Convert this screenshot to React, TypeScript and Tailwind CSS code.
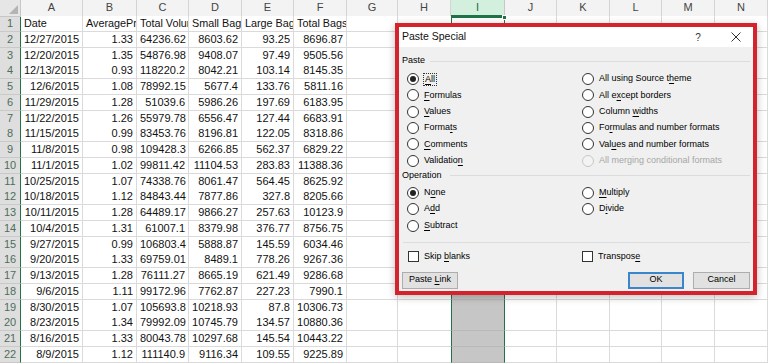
import React from "react";

const GRID =
  "grid grid-cols-[21px_62px_54px_52px_53px_52px_53px_51px_53px_54px_52px_53px_52px_53px_53px]";

const letters = ["A", "B", "C", "D", "E", "F", "G", "H", "I", "J", "K", "L", "M", "N"];

const head = ["Date", "AveragePrice", "Total Volume", "Small Bags", "Large Bags", "Total Bags"];

const data: string[][] = [
  ["12/27/2015", "1.33", "64236.62", "8603.62", "93.25", "8696.87"],
  ["12/20/2015", "1.35", "54876.98", "9408.07", "97.49", "9505.56"],
  ["12/13/2015", "0.93", "118220.2", "8042.21", "103.14", "8145.35"],
  ["12/6/2015", "1.08", "78992.15", "5677.4", "133.76", "5811.16"],
  ["11/29/2015", "1.28", "51039.6", "5986.26", "197.69", "6183.95"],
  ["11/22/2015", "1.26", "55979.78", "6556.47", "127.44", "6683.91"],
  ["11/15/2015", "0.99", "83453.76", "8196.81", "122.05", "8318.86"],
  ["11/8/2015", "0.98", "109428.3", "6266.85", "562.37", "6829.22"],
  ["11/1/2015", "1.02", "99811.42", "11104.53", "283.83", "11388.36"],
  ["10/25/2015", "1.07", "74338.76", "8061.47", "564.45", "8625.92"],
  ["10/18/2015", "1.12", "84843.44", "7877.86", "327.8", "8205.66"],
  ["10/11/2015", "1.28", "64489.17", "9866.27", "257.63", "10123.9"],
  ["10/4/2015", "1.31", "61007.1", "8379.98", "376.77", "8756.75"],
  ["9/27/2015", "0.99", "106803.4", "5888.87", "145.59", "6034.46"],
  ["9/20/2015", "1.33", "69759.01", "8489.1", "778.26", "9267.36"],
  ["9/13/2015", "1.28", "76111.27", "8665.19", "621.49", "9286.68"],
  ["9/6/2015", "1.11", "99172.96", "7762.87", "227.23", "7990.1"],
  ["8/30/2015", "1.07", "105693.8", "10218.93", "87.8", "10306.73"],
  ["8/23/2015", "1.34", "79992.09", "10745.79", "134.57", "10880.36"],
  ["8/16/2015", "1.33", "80043.78", "10297.68", "145.54", "10443.22"],
  ["8/9/2015", "1.12", "111140.9", "9116.34", "109.55", "9225.89"],
];

function cellClass(ci: number, row: number): string {
  if (ci === 9) {
    if (row === 1)
      return "h-full bg-white border-t-2 border-t-[#217346] border-x border-x-[#217346] border-b border-b-[#d4d4d4]";
    return "h-full bg-[#c6c6c6] border-x border-x-[#217346] border-b border-b-[#b9b9b9]";
  }
  if (ci === 8) return "h-full bg-white border-b border-[#dadada]";
  return "h-full bg-white border-r border-b border-[#dadada]";
}

function Row({ n, cells }: { n: number; cells: string[] }) {
  const isHead = n === 1;
  return (
    <div className={GRID + " h-[15.75px]"}>
      <div className="h-full bg-[#dedede] border-r border-r-[#217346] border-b border-b-[#c9c9c9] text-center text-[#4f6d5a] text-[11px] leading-[15px]">
        {n}
      </div>
      {letters.map((_, i) => {
        const ci = i + 1;
        const v = i < 6 ? cells[i] : "";
        return (
          <div key={ci} className={cellClass(ci, n)}>
            {v ? (
              <div
                className={
                  isHead
                    ? "px-[3px] text-left whitespace-nowrap overflow-hidden text-[10.8px] leading-[15px] text-[#111]"
                    : "px-[3px] text-right whitespace-nowrap overflow-hidden text-[11px] leading-[15px] text-[#111]"
                }
              >
                {v}
              </div>
            ) : null}
          </div>
        );
      })}
    </div>
  );
}

function Radio({ checked, disabled }: { checked?: boolean; disabled?: boolean }) {
  return (
    <span
      className={
        disabled
          ? "w-[12px] h-[12px] rounded-full border border-[#c8c8c8] bg-[#f3f3f3] flex items-center justify-center shrink-0"
          : "w-[12px] h-[12px] rounded-full border border-[#333] bg-white flex items-center justify-center shrink-0"
      }
    >
      {checked ? <span className="w-[6px] h-[6px] rounded-full bg-[#222]" /> : null}
    </span>
  );
}

function U({ children }: { children: React.ReactNode }) {
  return <span className="underline underline-offset-[1.5px] decoration-[0.8px]">{children}</span>;
}

function Opt({
  label,
  checked,
  disabled,
  focus,
}: {
  label: React.ReactNode;
  checked?: boolean;
  disabled?: boolean;
  focus?: boolean;
}) {
  return (
    <div className="h-[16.3px] flex items-center">
      <Radio checked={checked} disabled={disabled} />
      <span
        className={
          focus
            ? "ml-[4px] px-[1px] border border-dotted border-[#333] leading-[11px] text-[#000]"
            : disabled
            ? "ml-[5px] text-[#a6a6a6]"
            : "ml-[5px] text-[#000]"
        }
      >
        {label}
      </span>
    </div>
  );
}

function Check({ label }: { label: React.ReactNode }) {
  return (
    <div className="h-[14px] flex items-center">
      <span className="w-[11px] h-[11px] border border-[#333] bg-white shrink-0" />
      <span className="ml-[5px] text-[#000]">{label}</span>
    </div>
  );
}

function Dialog() {
  return (
    <div className="absolute left-[395px] top-[23px] w-[362px] h-[272px] border-4 border-[#d5232e] flex flex-col shadow-[0_2px_8px_rgba(0,0,0,0.25)] font-['Liberation_Sans',Arial,sans-serif] text-[9px]">
      <div className="h-[20px] bg-white flex items-center pl-[3px] shrink-0">
        <span className="text-[10.5px] text-[#111]">Paste Special</span>
        <div className="flex-1" />
        <span className="w-[10px] text-center text-[10px] text-[#333]">?</span>
        <span className="ml-[28px] mr-[12px] w-[10px] h-[10px] flex">
          <svg width="10" height="10" viewBox="0 0 10 10">
            <path d="M0.5 0.5 L9.5 9.5 M9.5 0.5 L0.5 9.5" stroke="#333" strokeWidth="1" fill="none" />
          </svg>
        </span>
      </div>
      <div className="flex-1 bg-[#f0f0f0] flex flex-col">
        <div className="mt-[7px] h-[14px] flex items-center pl-[3px] pr-[3px]">
          <span className="text-[#000]">Paste</span>
          <span className="ml-[5px] flex-1 h-px bg-[#dcdcdc]" />
        </div>
        <div className="mt-[3px] pl-[8px] grid grid-cols-[175px_1fr]">
          <Opt label={<><U>A</U>ll</>} checked focus />
          <Opt label={<>All using Source t<U>h</U>eme</>} />
          <Opt label={<><U>F</U>ormulas</>} />
          <Opt label={<>All e<U>x</U>cept borders</>} />
          <Opt label={<><U>V</U>alues</>} />
          <Opt label={<>Column <U>w</U>idths</>} />
          <Opt label={<>Forma<U>t</U>s</>} />
          <Opt label={<>Fo<U>r</U>mulas and number formats</>} />
          <Opt label={<><U>C</U>omments</>} />
          <Opt label={<>Val<U>u</U>es and number formats</>} />
          <Opt label={<>Validatio<U>n</U></>} />
          <Opt label={<>All merging conditional formats</>} disabled />
        </div>
        <div className="h-[14px] flex items-center pl-[3px] pr-[3px]">
          <span className="text-[#000]">Operation</span>
          <span className="ml-[8px] flex-1 h-px bg-[#dcdcdc]" />
        </div>
        <div className="mt-[2px] pl-[8px] grid grid-cols-[175px_1fr]">
          <Opt label={<>N<U>o</U>ne</>} checked />
          <Opt label={<><U>M</U>ultiply</>} />
          <Opt label={<>A<U>d</U>d</>} />
          <Opt label={<>D<U>i</U>vide</>} />
          <Opt label={<><U>S</U>ubtract</>} />
          <div />
        </div>
        <div className="mt-[8px] ml-[4px] mr-[3px] h-px bg-[#dcdcdc]" />
        <div className="mt-[7px] pl-[9px] grid grid-cols-[174px_1fr]">
          <Check label={<>Skip <U>b</U>lanks</>} />
          <Check label={<>Transpos<U>e</U></>} />
        </div>
        <div className="mt-[8px] px-[3px] flex items-center">
          <div className="w-[56px] h-[17px] bg-[#e1e1e1] border border-[#adadad] flex items-center justify-center text-[#000]">
            <span>
              Paste <U>L</U>ink
            </span>
          </div>
          <div className="flex-1" />
          <div className="w-[56px] h-[17px] bg-[#e1e1e1] border-2 border-[#3a86cc] flex items-center justify-center text-[#000]">
            <span>OK</span>
          </div>
          <div className="ml-[9px] w-[57px] h-[17px] bg-[#e1e1e1] border border-[#adadad] flex items-center justify-center text-[#000]">
            <span>Cancel</span>
          </div>
        </div>
      </div>
    </div>
  );
}

export default function App() {
  return (
    <div className="relative w-[768px] h-[363px] overflow-hidden bg-white font-['Liberation_Sans',Arial,sans-serif]">
      <div className={GRID + " h-[16px]"}>
        <div className="h-full bg-[#e6e6e6] border-r border-b border-[#c6c6c6] relative">
          <svg className="absolute right-[2px] bottom-[2px]" width="9" height="9" viewBox="0 0 9 9">
            <path d="M9 0 L9 9 L0 9 Z" fill="#b4b4b4" />
          </svg>
        </div>
        {letters.map((l) =>
          l === "I" ? (
            <div
              key={l}
              className="h-full bg-[#d3f0de] border-r border-r-[#c8c8c8] border-b-2 border-b-[#217346] text-center text-[11px] leading-[15px] text-[#1d6a3f]"
            >
              {l}
            </div>
          ) : (
            <div
              key={l}
              className="h-full bg-[#f3f3f3] border-r border-r-[#d4d4d4] border-b border-b-[#bdbdbd] text-center text-[11px] leading-[15px] text-[#444]"
            >
              {l}
            </div>
          )
        )}
      </div>
      <Row n={1} cells={head} />
      {data.map((r, i) => (
        <Row key={i} n={i + 2} cells={r} />
      ))}
      <div className="absolute left-[502px] top-[15px] w-[5px] h-[5px] bg-[#217346] border border-white" />
      <Dialog />
    </div>
  );
}
